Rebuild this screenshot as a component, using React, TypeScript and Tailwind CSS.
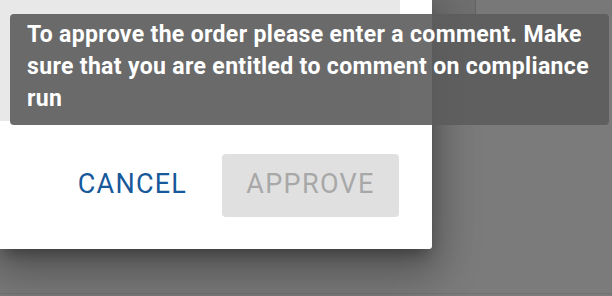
export default function App() {
  return (
    <div className="relative w-[612px] h-[296px] overflow-hidden bg-[#7b7b7b] font-['Roboto','Liberation_Sans',sans-serif]">
      {/* page behind the overlay, only its top edge shows */}
      <div className="absolute left-0 top-0 w-full h-[16px] flex">
        <div className="w-[475px] h-full bg-[#6f6f6f]" />
        <div className="w-px h-full bg-[#626262]" />
        <div className="flex-1 h-full bg-[#787878]" />
      </div>
      <div className="absolute left-0 bottom-[2px] w-full h-px bg-[#717171]" />

      {/* dialog */}
      <div className="absolute left-0 top-0 w-[432px] h-[249px] bg-white rounded-br-[3px] flex flex-col shadow-[0_8px_14px_-4px_rgba(0,0,0,0.32),0_22px_44px_6px_rgba(0,0,0,0.24),0_6px_40px_6px_rgba(0,0,0,0.12)]">
        <div className="w-[400px] h-[121px] bg-[#e8e8e8]" />
        <div className="flex justify-end items-center pt-[33px] pr-[33px]">
          <button
            type="button"
            className="h-[63px] px-[16px] mr-[19px] pb-[3px] text-[27px] leading-none tracking-[0.045em] text-[#17599a] uppercase"
          >
            Cancel
          </button>
          <button
            type="button"
            disabled
            className="w-[177px] h-[63px] rounded-[4px] bg-[#e0e0e0] pb-[3px] text-[27px] leading-none tracking-[0.05em] text-[#a8a8a8] uppercase"
          >
            Approve
          </button>
        </div>
      </div>

      {/* tooltip */}
      <div className="absolute left-[10px] top-[14px] w-[599px] h-[111px] rounded-[4px] bg-[rgba(92,92,92,0.9)] pl-[17px] pt-[5px] text-white text-[23px] leading-[32px] font-bold tracking-[0.015em]">
        <div className="whitespace-nowrap">To approve the order please enter a comment. Make</div>
        <div className="whitespace-nowrap">sure that you are entitled to comment on compliance</div>
        <div className="whitespace-nowrap">run</div>
      </div>
    </div>
  );
}
